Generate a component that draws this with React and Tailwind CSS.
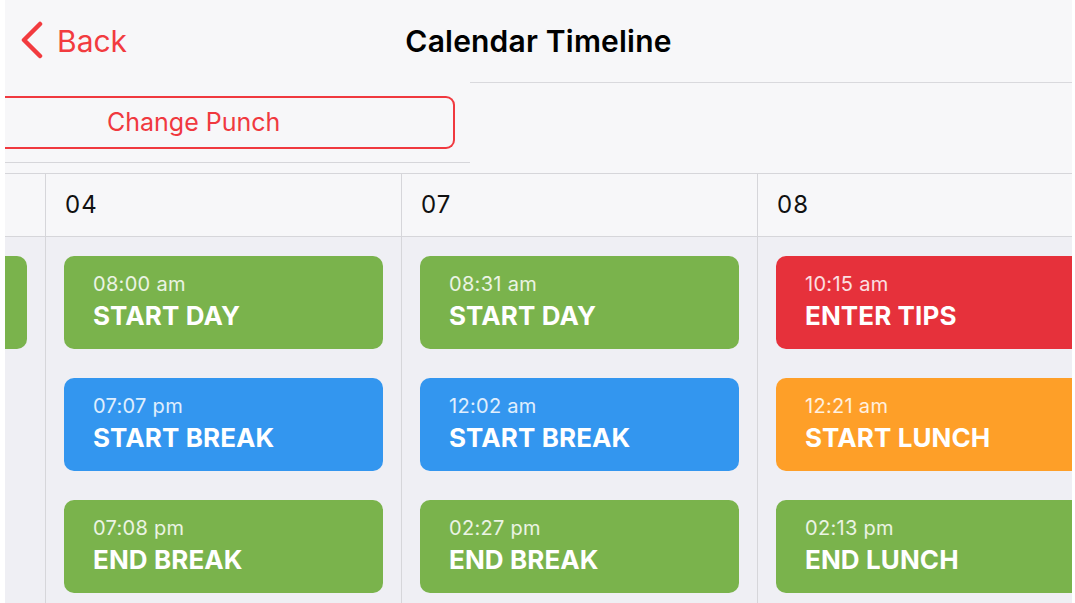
import React from "react";

const font = { fontFamily: "Inter, 'Noto Sans', sans-serif" };

const colors = {
  green: "bg-[#7ab34c]",
  blue: "bg-[#3396ef]",
  red: "bg-[#e6313b]",
  orange: "bg-[#fe9f28]",
};

function Card({ color, time, label }) {
  return (
    <div className={`h-[93px] w-[319px] shrink-0 rounded-[10px] ${color} pl-[29px] pt-[16px] text-white`}>
      <div className="text-[20px] leading-[24px] tracking-[0.3px] text-white/85">{time}</div>
      <div className="mt-[5px] text-[26px] font-bold leading-[30px] tracking-[0.1px]">{label}</div>
    </div>
  );
}

const days = [
  {
    day: "04",
    cards: [
      { color: colors.green, time: "08:00 am", label: "START DAY" },
      { color: colors.blue, time: "07:07 pm", label: "START BREAK" },
      { color: colors.green, time: "07:08 pm", label: "END BREAK" },
    ],
  },
  {
    day: "07",
    cards: [
      { color: colors.green, time: "08:31 am", label: "START DAY" },
      { color: colors.blue, time: "12:02 am", label: "START BREAK" },
      { color: colors.green, time: "02:27 pm", label: "END BREAK" },
    ],
  },
  {
    day: "08",
    cards: [
      { color: colors.red, time: "10:15 am", label: "ENTER TIPS" },
      { color: colors.orange, time: "12:21 am", label: "START LUNCH" },
      { color: colors.green, time: "02:13 pm", label: "END LUNCH" },
    ],
  },
];

export default function App() {
  return (
    <div className="flex h-[603px] w-[1075px] overflow-hidden bg-white" style={font}>
      <div className="relative ml-[5px] flex h-full w-[1067px] flex-col overflow-hidden bg-[#f7f7f9]">
        {/* Nav bar */}
        <div className="grid h-[83px] shrink-0 grid-cols-[1fr_auto_1fr] items-center border-b border-[#d9d9dd] pb-[1px]">
          <div className="flex items-center pl-[15px]">
            <svg width="24" height="38" viewBox="0 0 24 38" className="-mt-[1px]">
              <polyline
                points="20,3 4,19 20,35"
                fill="none"
                stroke="#f23b3f"
                strokeWidth="4.5"
                strokeLinecap="round"
                strokeLinejoin="round"
              />
            </svg>
            <span className="ml-[13px] text-[30px] leading-none text-[#f23b3f]">Back</span>
          </div>
          <div className="text-[30px] font-semibold leading-none tracking-[0.2px] text-black">Calendar Timeline</div>
          <div />
        </div>

        {/* Toolbar area (hidden behind panel) */}
        <div className="h-[91px] shrink-0 border-b border-[#d6d6da]" />

        {/* Day header row */}
        <div className="flex h-[63px] shrink-0 border-b border-[#d6d6da] bg-[#f7f7f9]">
          <div className="w-[41px] shrink-0 border-r border-[#d6d6da]" />
          {days.map((d) => (
            <div
              key={d.day}
              className="flex w-[356px] shrink-0 items-center border-r border-[#d6d6da] pl-[19px] text-[24px] tracking-[1px] text-[#111]"
            >
              {d.day}
            </div>
          ))}
        </div>

        {/* Body */}
        <div className="flex flex-1 bg-[#efeff4]">
          <div className="flex w-[41px] shrink-0 justify-end overflow-hidden border-r border-[#d6d6da] pr-[18px] pt-[19px]">
            <div className="h-[93px] w-[319px] shrink-0 rounded-[10px] bg-[#7ab34c]" />
          </div>
          {days.map((d) => (
            <div
              key={d.day}
              className="flex w-[356px] shrink-0 flex-col gap-[29px] border-r border-[#d6d6da] pl-[18px] pt-[19px]"
            >
              {d.cards.map((c, i) => (
                <Card key={i} {...c} />
              ))}
            </div>
          ))}
        </div>

        {/* Dropdown panel overlay */}
        <div className="absolute left-0 top-[82px] h-[81px] w-[465px] border-b border-[#d6d6da] bg-[#f7f7f9]">
          <div className="mt-[14px] flex h-[53px] w-[450px] items-center rounded-r-[9px] border-y-2 border-r-2 border-[#f0393f] pl-[102px] text-[25px] text-[#f0393f]">
            Change Punch
          </div>
        </div>
      </div>
    </div>
  );
}
